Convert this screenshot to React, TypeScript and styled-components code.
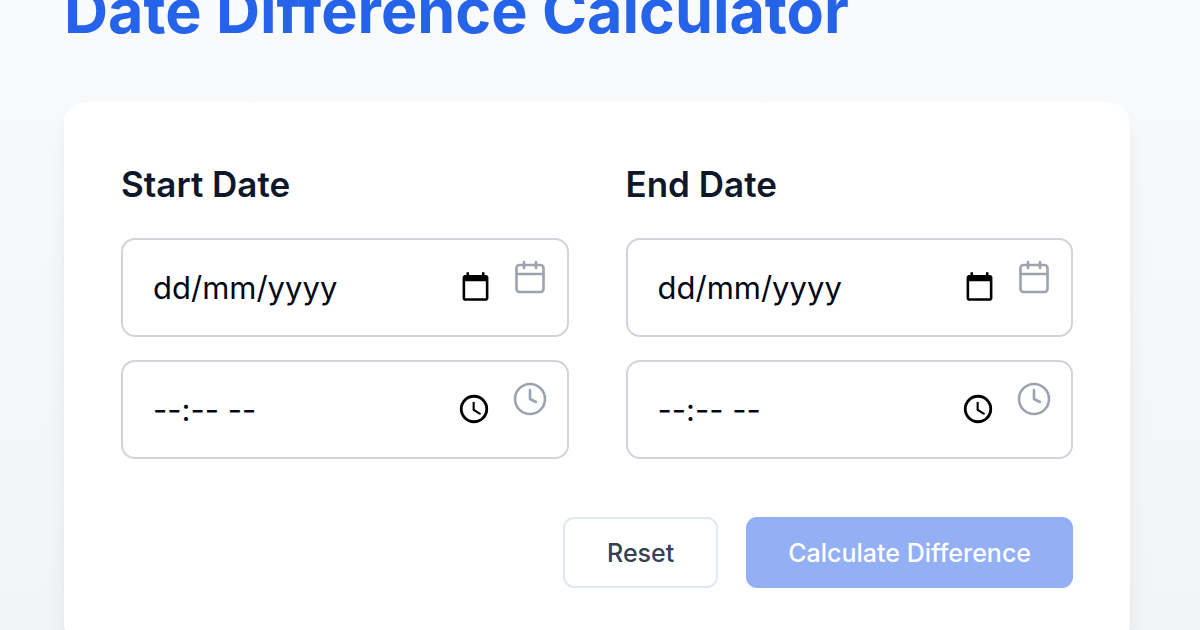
import React, { useState } from "react";
import styled, { createGlobalStyle } from "styled-components";
import { Calendar, Clock } from "lucide-react";

const GlobalStyle = createGlobalStyle`
  *, *::before, *::after {
    box-sizing: border-box;
  }
  body {
    margin: 0;
    color: #0f172a;
    font-family: Inter, "Liberation Sans", sans-serif;
  }
`;

const Page = styled.div`
  height: 100vh;
  overflow: hidden;
  background: linear-gradient(to bottom, #f8fafc, #f3f4f6);
`;

const Content = styled.main`
  margin: -24px 70px 0 64px;
`;

const Title = styled.h1`
  margin: 0 0 55px;
  color: #2563eb;
  font-size: 61px;
  font-weight: 700;
  line-height: 71px;
  white-space: nowrap;
`;

const Card = styled.form`
  padding: 57px;
  border-radius: 22px;
  background: #ffffff;
  box-shadow: 0 18px 28px -5px rgba(0, 0, 0, 0.08), 0 8px 12px -6px rgba(0, 0, 0, 0.08);
`;

const Columns = styled.div`
  display: grid;
  grid-template-columns: 1fr 1fr;
  gap: 57px;
`;

const Group = styled.fieldset`
  display: flex;
  flex-direction: column;
  gap: 23px;
  min-width: 0;
  margin: 0;
  padding: 0;
  border: 0;
`;

const GroupTitle = styled.legend`
  margin-bottom: 28px;
  padding: 0;
  font-size: 35px;
  font-weight: 600;
  line-height: 51px;
`;

const Field = styled.div`
  display: flex;
  align-items: center;
  height: 99px;
  padding: 0 19px 0 30px;
  border: 2px solid #d1d5db;
  border-radius: 14px;
  background: #ffffff;
`;

const FieldInput = styled.input`
  flex: 1;
  min-width: 0;
  height: 100%;
  padding: 0;
  border: 0;
  outline: 0;
  background: transparent;
  color: #020817;
  font: inherit;
  font-size: 31px;

  &::placeholder {
    color: #020817;
    opacity: 1;
  }
`;

const PickerButton = styled.button`
  display: flex;
  margin: 0 21px 2px 0;
  padding: 0;
  border: 0;
  background: transparent;
  color: #000000;
`;

const FieldMark = styled.span`
  display: flex;
  align-self: flex-start;
  margin-top: 19px;
  color: #9ca3af;
`;

const Actions = styled.div`
  display: flex;
  justify-content: flex-end;
  gap: 28px;
  margin-top: 58px;
`;

const Button = styled.button<{ $primary?: boolean }>`
  height: 71px;
  padding: 0 42px;
  border: ${(p) => (p.$primary ? "0" : "2px solid #e2e8f0")};
  border-radius: 11px;
  background: ${(p) => (p.$primary ? "#94b0f5" : "#ffffff")};
  color: ${(p) => (p.$primary ? "#ffffff" : "#334155")};
  font: inherit;
  font-size: 25px;
  font-weight: 500;
`;

const DatePickerIcon = () => (
  <svg width="31" height="31" viewBox="0 0 24 24" fill="currentColor" aria-hidden="true">
    <path d="M20 3h-1V1h-2v2H7V1H5v2H4c-1.1 0-2 .9-2 2v16c0 1.1.9 2 2 2h16c1.1 0 2-.9 2-2V5c0-1.1-.9-2-2-2zm0 18H4V8h16v13z" />
  </svg>
);

const TimePickerIcon = () => (
  <svg width="34" height="34" viewBox="0 0 24 24" fill="currentColor" aria-hidden="true">
    <path d="M12 2a10 10 0 1 0 0 20 10 10 0 0 0 0-20zm0 18a8 8 0 1 1 0-16 8 8 0 0 1 0 16z" />
    <path d="M12.5 7H11v6l5.25 3.15.75-1.23-4.5-2.67z" />
  </svg>
);

type Moment = { date: string; time: string };

const EMPTY: Moment = { date: "", time: "" };

type MomentFieldsProps = {
  title: string;
  value: Moment;
  onChange: (value: Moment) => void;
};

function MomentFields({ title, value, onChange }: MomentFieldsProps) {
  return (
    <Group>
      <GroupTitle>{title}</GroupTitle>
      <Field>
        <FieldInput
          aria-label={title}
          placeholder="dd/mm/yyyy"
          value={value.date}
          onChange={(e) => onChange({ ...value, date: e.target.value })}
        />
        <PickerButton type="button" aria-label="Show date picker">
          <DatePickerIcon />
        </PickerButton>
        <FieldMark>
          <Calendar size={36} strokeWidth={1.75} aria-hidden="true" />
        </FieldMark>
      </Field>
      <Field>
        <FieldInput
          aria-label={title.replace("Date", "Time")}
          placeholder="--:-- --"
          value={value.time}
          onChange={(e) => onChange({ ...value, time: e.target.value })}
        />
        <PickerButton type="button" aria-label="Show time picker">
          <TimePickerIcon />
        </PickerButton>
        <FieldMark>
          <Clock size={36} strokeWidth={1.75} aria-hidden="true" />
        </FieldMark>
      </Field>
    </Group>
  );
}

export default function App() {
  const [start, setStart] = useState<Moment>(EMPTY);
  const [end, setEnd] = useState<Moment>(EMPTY);

  const reset = () => {
    setStart(EMPTY);
    setEnd(EMPTY);
  };

  return (
    <>
      <GlobalStyle />
      <Page>
        <Content>
          <Title>Date Difference Calculator</Title>
          <Card onSubmit={(e) => e.preventDefault()}>
            <Columns>
              <MomentFields title="Start Date" value={start} onChange={setStart} />
              <MomentFields title="End Date" value={end} onChange={setEnd} />
            </Columns>
            <Actions>
              <Button type="button" onClick={reset}>
                Reset
              </Button>
              <Button type="submit" $primary disabled={!start.date || !end.date}>
                Calculate Difference
              </Button>
            </Actions>
          </Card>
        </Content>
      </Page>
    </>
  );
}
